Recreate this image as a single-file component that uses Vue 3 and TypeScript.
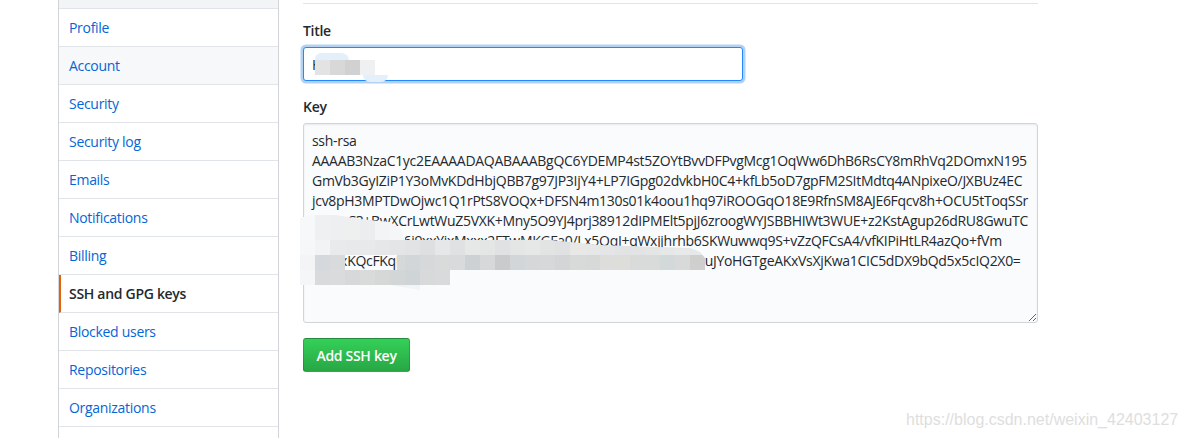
<script setup lang="ts">
import { computed } from 'vue'

interface Item { label: string; active?: boolean; hover?: boolean }
const items: Item[] = [
  { label: 'Profile' },
  { label: 'Account', hover: true },
  { label: 'Security' },
  { label: 'Security log' },
  { label: 'Emails' },
  { label: 'Notifications' },
  { label: 'Billing' },
  { label: 'SSH and GPG keys', active: true },
  { label: 'Blocked users' },
  { label: 'Repositories' },
  { label: 'Organizations' },
  { label: '' }
]

const keyText = [
  'ssh-rsa',
  'AAAAB3NzaC1yc2EAAAADAQABAAABgQC6YDEMP4st5ZOYtBvvDFPvgMcg1OqWw6DhB6RsCY8mRhVq2DOmxN195',
  'GmVb3GyIZiP1Y3oMvKDdHbjQBB7g97JP3IjY4+LP7IGpg02dvkbH0C4+kfLb5oD7gpFM2SItMdtq4ANpixeO/JXBUz4EC',
  'jcv8pH3MPTDwOjwc1Q1rPtS8VOQx+DFSN4m130s01k4oou1hq97iROOGqO18E9RfnSM8AJE6Fqcv8h+OCU5tToqSSr',
  'xxxxxC3+BwXCrLwtWuZ5VXK+Mny5O9YJ4prj38912dIPMElt5pjJ6zroogWYJSBBHIWt3WUE+z2KstAgup26dRU8GwuTC',
  'xxxxxxxxxxID+6i9xxYixMxxx2FTwMKGFa0/Lx5OqI+qWxjjhrhb6SKWuwwq9S+vZzQFCsA4/vfKIPiHtLR4azQo+fVm',
  'xxxxxKQcFKqL'.padEnd(12) + '\u2003'.repeat(21) + 'xxuJYoHGTgeAKxVsXjKwa1CIC5dDX9bQd5x5cIQ2X0='
].join('\n')

type Cell = { x: number; y: number; w: number; c: string; h: number }
const row = (x: number, y: number, h: number, cols: string[], w = 15): Cell[] =>
  cols.map((c, i) => ({ x: x + i * w, y, w, h, c }))

const cells = computed<Cell[]>(() => [
  ...row(300, 210, 30, ['#f7f8f9', '#eff0f1', '#eeeff0', '#eef0f0', '#ecedee', '#f3f4f5', '#f5f6f7']),
  ...row(300, 240, 15, ['#f6f7f8', '#f2f3f4', '#e9eaeb', '#e8e9ea', '#e8e9ea', '#e6e7e8', '#e4e5e6', '#e1e3e4', '#dddfe0', '#e6e7e8', '#e0e1e2', '#e6e7e7', '#e4e5e5', '#e0e1e2', '#e4e5e5', '#e6e7e7', '#e2e3e3', '#e0e1e2', '#e8e8e7', '#e6e7e7', '#e4e5e6', '#e2e3e4', '#e2e3e4', '#e4e5e5', '#e6e7e7', '#e8e9e9', '#e6e7e8', '#e4e5e6', '#e4e5e6']),
  ...row(300, 255, 15, ['#f3f4f5', '#d5d8dc', '#d8dadc']),
  { x: 397, y: 255, w: 8, h: 15, c: '#d6d9da' },
  ...row(405, 255, 15, ['#d2d6d8', '#d6d8d9', '#d9dbdb', '#d8dadb', '#cdd1d3', '#d6d8d9', '#c9cbcd', '#d3d6d8', '#d5d7d8', '#d6d8d9', '#d3d5d6', '#d8d9d9', '#d7d8d8', '#dddedb', '#dddeda', '#d9dada', '#d9dada', '#d3d9d9', '#d8dada', '#cfcfcd', '#d3d9dd', '#ced0d0', '#dcdedd', '#d5dadb', '#dcdedc', '#c9ccd4']),
  ...row(300, 270, 15, ['#f5f6f7', '#d8dadb', '#d9dbdc', '#d6d8d9', '#d9dbda', '#d6d8d7', '#d2d6d6', '#cfd5d7', '#d7d9da', '#d8dadb', '#dcdede']),
  ...row(390, 285, 5, ['#f1f2f3', '#f3f4f5'])
])

const titleCells: Cell[] = [
  ...row(315, 60, 15, ['#e3e3e4', '#d8d8d9', '#d1d1d2', '#eff0f2'])
]
</script>

<template>
  <div class="page">
    <nav class="menu">
      <div class="menu-head"></div>
      <a
        v-for="item in items"
        :key="item.label"
        class="menu-item"
        :class="{ active: item.active, hover: item.hover }"
      >{{ item.label }}</a>
    </nav>

    <main class="content">
      <form class="form">
        <div class="group title-group">
          <label class="label">Title</label>
          <input class="field title-field" value="H" />
        </div>
        <div class="group key-group">
          <label class="label">Key</label>
          <textarea class="field key-field" wrap="off" :value="keyText"></textarea>
        </div>
        <button type="button" class="submit">Add SSH key</button>
      </form>
    </main>

    <div class="mosaic">
      <i
        v-for="(c, i) in cells"
        :key="i"
        class="cell"
        :style="{ left: c.x - 300 + 'px', top: c.y - 210 + 'px', width: c.w + 'px', height: c.h + 'px', background: c.c }"
      ></i>
    </div>

    <div class="title-mosaic">
      <span class="blob blob-top"></span>
      <span class="blob blob-bottom"></span>
      <i
        v-for="(c, i) in titleCells"
        :key="i"
        class="cell"
        :style="{ left: c.x - 310 + 'px', top: c.y - 50 + 'px', width: c.w + 'px', height: c.h + 'px', background: c.c }"
      ></i>
    </div>

    <div class="watermark">https://blog.csdn.net/weixin_42403127</div>
  </div>
</template>

<style>
html, body { margin: 0; background: #fff; overflow: hidden; }
</style>

<style scoped>
.page {
  position: relative;
  display: flex;
  gap: 24px;
  width: 1187px;
  height: 438px;
  padding-left: 58px;
  box-sizing: border-box;
  overflow: hidden;
  background: #fff;
  font-family: "Open Sans", "Noto Sans", sans-serif;
  font-size: 14px;
  color: #24292e;
}
.menu {
  flex: none;
  width: 221px;
  height: 438px;
  box-sizing: border-box;
  border-left: 1px solid #d1d5da;
  border-right: 1px solid #d1d5da;
  overflow: hidden;
}
.menu-head {
  height: 8px;
  background: #f3f4f6;
  border-bottom: 1px solid #e1e4e8;
}
.menu-item {
  display: flex;
  align-items: center;
  height: 37px;
  padding-left: 10px;
  border-bottom: 1px solid #e1e4e8;
  color: #0366d6;
  letter-spacing: -0.3px;
}
.menu-item.hover { background: #f6f8fa; }
.menu-item.active {
  padding-left: 8px;
  border-left: 2px solid #e36209;
  color: #24292e;
  font-weight: 600;
}
.content {
  flex: none;
  width: 735px;
}
.form {
  display: flex;
  flex-direction: column;
  align-items: flex-start;
  margin-top: 3px;
  border-top: 1px solid #e1e4e8;
}
.group { display: flex; flex-direction: column; width: 100%; }
.title-group { padding-top: 17px; }
.key-group { padding-top: 16px; }
.label {
  height: 20px;
  line-height: 20px;
  margin-bottom: 6px;
  font-weight: 600;
  letter-spacing: -0.3px;
}
.field {
  box-sizing: border-box;
  font: inherit;
  color: #24292e;
  outline: none;
  border-radius: 3px;
}
.title-field {
  width: 440px;
  height: 34px;
  padding: 6px 8px;
  background: #fff;
  border: 1px solid #2188ff;
  box-shadow: 0 0 0 2.5px rgba(3, 102, 214, 0.3);
}
.key-field {
  display: block;
  width: 735px;
  height: 200px;
  padding: 7px 8px;
  background: #fafbfc;
  border: 1px solid #d1d5da;
  box-shadow: inset 0 1px 2px rgba(27, 31, 35, 0.075);
  line-height: 20px;
  letter-spacing: -0.3px;
  overflow: hidden;
  resize: vertical;
}
.submit {
  margin-top: 15px;
  width: 107px;
  height: 34px;
  padding: 0;
  border: 1px solid rgba(27, 31, 35, 0.2);
  border-radius: 3px;
  background: linear-gradient(#34d058, #28a745);
  color: #fff;
  font: inherit;
  font-weight: 600;
  letter-spacing: -0.3px;
}
.mosaic {
  position: absolute;
  left: 300px;
  top: 210px;
  width: 410px;
  height: 85px;
  clip-path: polygon(0 8px, 10px 5px, 36px 5px, 60px 9px, 90px 12px, 100px 18px, 104px 27px, 205px 25px, 270px 32px, 300px 35px, 390px 38px, 400px 42px, 405px 48px, 405px 60px, 150px 60px, 150px 80px, 120px 80px, 90px 75px, 0 75px);
}
.cell { position: absolute; display: block; }
.title-mosaic {
  position: absolute;
  left: 310px;
  top: 50px;
  width: 85px;
  height: 35px;
}
.blob { position: absolute; background: #e3effb; }
.blob-top { left: 5px; top: 3px; width: 34px; height: 8px; border-radius: 8px 10px 0 0; }
.blob-bottom { left: 53px; top: 25px; width: 25px; height: 7px; border-radius: 0 0 8px 8px; }
.watermark {
  position: absolute;
  left: 906px;
  top: 410px;
  font-family: "Liberation Sans", Arial, sans-serif;
  font-size: 16px;
  line-height: 20px;
  color: #dedede;
  white-space: nowrap;
}
</style>
